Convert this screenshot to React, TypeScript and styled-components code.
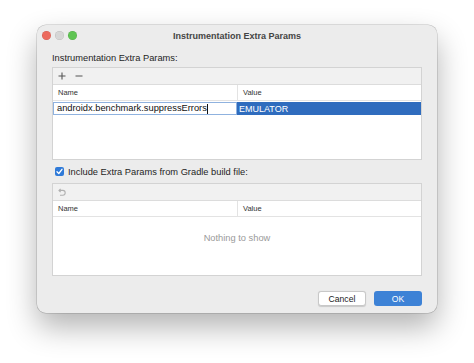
import React from "react";
import styled, { createGlobalStyle } from "styled-components";

const GlobalStyle = createGlobalStyle`
  html, body {
    margin: 0;
    padding: 0;
    background: #ffffff;
  }
  body {
    font-family: "Liberation Sans", Arial, sans-serif;
    color: #222;
  }
`;

const Page = styled.div`
  padding: 25px 37px 50px 37px;
`;

const Window = styled.div`
  width: 400px;
  height: 288px;
  box-sizing: border-box;
  background: #ececec;
  border-radius: 9px;
  box-shadow: 0 0 0 0.5px rgba(0, 0, 0, 0.22), 0 14px 30px rgba(0, 0, 0, 0.3);
  display: flex;
  flex-direction: column;
  overflow: hidden;
`;

const TitleBar = styled.div`
  height: 20px;
  display: grid;
  grid-template-columns: 1fr auto 1fr;
  align-items: center;
  padding: 0 5px;
`;

const Lights = styled.div`
  display: flex;
  gap: 4px;
  padding-top: 1px;
`;

const Light = styled.span<{ $color: string }>`
  width: 9px;
  height: 9px;
  border-radius: 50%;
  background: ${p => p.$color};
  box-shadow: inset 0 0 0 0.5px rgba(0, 0, 0, 0.12);
`;

const Title = styled.div`
  font-size: 9px;
  font-weight: bold;
  color: #444;
  padding-top: 1px;
`;

const Body = styled.div`
  padding: 0 15px;
  display: flex;
  flex-direction: column;
`;

const Label = styled.div`
  margin-top: 7px;
  height: 12px;
  line-height: 12px;
  font-size: 9.3px;
  color: #1e1e1e;
`;

const Panel = styled.div<{ $top: number }>`
  margin-top: ${p => p.$top}px;
  height: 93px;
  box-sizing: border-box;
  border: 1px solid #d3d3d3;
  background: #ffffff;
  display: flex;
  flex-direction: column;
`;

const Toolbar = styled.div`
  height: 16px;
  background: #f1f1f1;
  border-bottom: 1px solid #dcdcdc;
  display: flex;
  align-items: center;
  gap: 9px;
  padding-left: 5px;
`;

const ToolIcon = styled.svg<{ $dim?: boolean }>`
  width: 8px;
  height: 8px;
  stroke: ${p => (p.$dim ? "#b0b0b0" : "#555")};
  fill: none;
  stroke-width: 1.1;
`;

const HeaderRow = styled.div`
  height: 15px;
  display: grid;
  grid-template-columns: 184px 1fr;
  border-bottom: 1px solid #e3e3e3;
`;

const HeaderCell = styled.div<{ $divider?: boolean }>`
  font-size: 7.5px;
  color: #333;
  display: flex;
  align-items: center;
  padding-left: 5px;
  border-left: ${p => (p.$divider ? "1px solid #e3e3e3" : "none")};
`;

const DataRow = styled.div`
  margin-top: 1px;
  height: 13px;
  display: grid;
  grid-template-columns: 184px 1fr;
`;

const EditCell = styled.div`
  box-sizing: border-box;
  border: 1px solid #8fb2df;
  background: #ffffff;
  font-size: 9.3px;
  line-height: 11px;
  padding-left: 3px;
  display: flex;
  align-items: center;
  color: #111;
`;

const Caret = styled.span`
  display: inline-block;
  width: 1px;
  height: 10px;
  background: #111;
  margin-left: 0.5px;
`;

const ValueCell = styled.div<{ $selected?: boolean }>`
  background: ${p => (p.$selected ? "#2f6cbe" : "transparent")};
  color: ${p => (p.$selected ? "#ffffff" : "#222")};
  font-size: 9px;
  display: flex;
  align-items: center;
  padding-left: 2px;
`;

const Empty = styled.div`
  flex: 1;
  display: flex;
  align-items: center;
  justify-content: center;
  font-size: 9.3px;
  color: #9a9a9a;
  padding-bottom: 16px;
`;

const CheckRow = styled.label`
  margin-top: 5px;
  height: 13px;
  display: flex;
  align-items: center;
  gap: 4px;
  font-size: 9.3px;
  color: #1e1e1e;
  padding-left: 3px;
`;

const Box = styled.span`
  width: 9px;
  height: 9px;
  border-radius: 2px;
  background: #2f7ad8;
  display: flex;
  align-items: center;
  justify-content: center;
`;

const Buttons = styled.div`
  margin-top: 15px;
  display: flex;
  justify-content: flex-end;
  gap: 8px;
`;

const Button = styled.button<{ $primary?: boolean }>`
  width: 48px;
  height: 15px;
  box-sizing: border-box;
  border-radius: 3px;
  font-family: "Liberation Sans", Arial, sans-serif;
  font-size: 8.6px;
  padding: 0;
  border: ${p => (p.$primary ? "none" : "0.5px solid #c8c8c8")};
  background: ${p => (p.$primary ? "#3d82d6" : "#ffffff")};
  color: ${p => (p.$primary ? "#ffffff" : "#222")};
  box-shadow: ${p => (p.$primary ? "none" : "0 0.5px 1px rgba(0,0,0,0.15)")};
`;

export default function App() {
  return (
    <Page>
      <GlobalStyle />
      <Window>
        <TitleBar>
          <Lights>
            <Light $color="#ec6a5e" />
            <Light $color="#d6d6d6" />
            <Light $color="#5fc453" />
          </Lights>
          <Title>Instrumentation Extra Params</Title>
          <div />
        </TitleBar>
        <Body>
          <Label>Instrumentation Extra Params:</Label>
          <Panel $top={3}>
            <Toolbar>
              <ToolIcon viewBox="0 0 8 8">
                <path d="M4 0.5V7.5M0.5 4H7.5" />
              </ToolIcon>
              <ToolIcon viewBox="0 0 8 8">
                <path d="M0.5 4H7.5" />
              </ToolIcon>
            </Toolbar>
            <HeaderRow>
              <HeaderCell>Name</HeaderCell>
              <HeaderCell $divider>Value</HeaderCell>
            </HeaderRow>
            <DataRow>
              <EditCell>
                androidx.benchmark.suppressErrors
                <Caret />
              </EditCell>
              <ValueCell $selected>EMULATOR</ValueCell>
            </DataRow>
          </Panel>
          <CheckRow>
            <Box>
              <svg width="7" height="7" viewBox="0 0 7 7">
                <path d="M1 3.7L2.8 5.5L6 1.3" stroke="#fff" strokeWidth="1.3" fill="none" strokeLinecap="round" strokeLinejoin="round" />
              </svg>
            </Box>
            Include Extra Params from Gradle build file:
          </CheckRow>
          <Panel $top={5}>
            <Toolbar>
              <ToolIcon viewBox="0 0 8 8" $dim>
                <path d="M2.6 0.8L1 2.4L2.6 4M1 2.4H4.8A2.4 2.4 0 0 1 4.8 7.2H2" />
              </ToolIcon>
            </Toolbar>
            <HeaderRow>
              <HeaderCell>Name</HeaderCell>
              <HeaderCell $divider>Value</HeaderCell>
            </HeaderRow>
            <Empty>Nothing to show</Empty>
          </Panel>
          <Buttons>
            <Button>Cancel</Button>
            <Button $primary>OK</Button>
          </Buttons>
        </Body>
      </Window>
    </Page>
  );
}
